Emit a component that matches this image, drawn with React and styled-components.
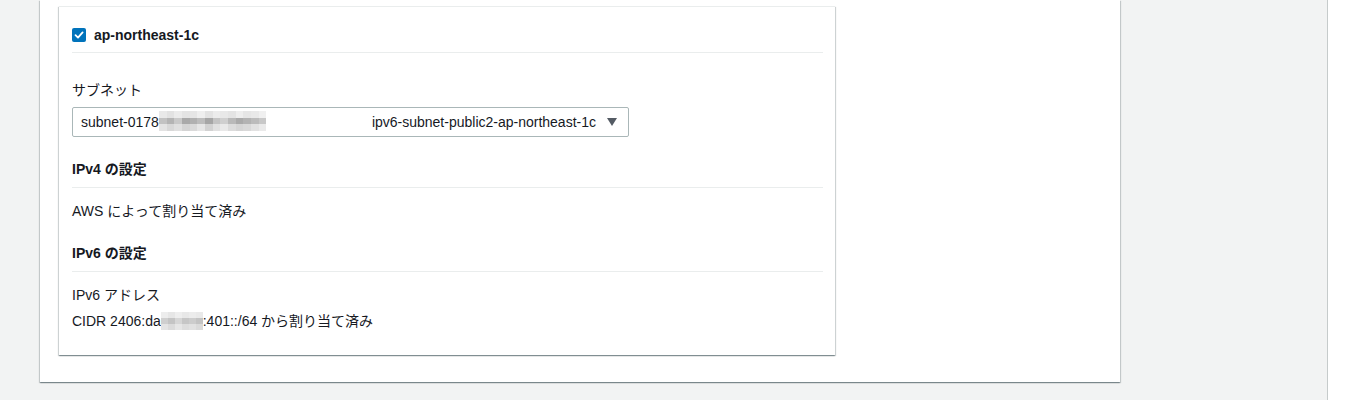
import React from 'react';
import styled, { createGlobalStyle } from 'styled-components';

const Global = createGlobalStyle`
  html, body { margin: 0; padding: 0; }
  body {
    font-family: "Liberation Sans", "Noto Sans CJK JP", sans-serif;
    font-size: 14px;
    color: #16191f;
    background: #ffffff;
  }
`;

const Page = styled.div`
  display: flex;
  width: 1368px;
  height: 400px;
  overflow: hidden;
`;

const Main = styled.main`
  flex: 0 0 1327px;
  box-sizing: border-box;
  background: #f2f3f3;
  padding-left: 40px;
`;

const SideRail = styled.aside`
  flex: 1;
  background: #ffffff;
  border-left: 1px solid #c6cbcb;
`;

const OuterCard = styled.section`
  width: 1080px;
  box-sizing: border-box;
  background: #ffffff;
  padding: 6px 19px 27px;
  box-shadow: 0 1px 1px 0 rgba(0, 28, 36, 0.3), 1px 1px 1px 0 rgba(0, 28, 36, 0.15),
    -1px 1px 1px 0 rgba(0, 28, 36, 0.15);
`;

const InnerCard = styled.div`
  width: 776px;
  box-sizing: border-box;
  background: #ffffff;
  border-top: 1px solid #eaeded;
  padding: 0 12px 24px 13px;
  box-shadow: 0 1px 1px 0 rgba(0, 28, 36, 0.3), 1px 1px 1px 0 rgba(0, 28, 36, 0.15),
    -1px 1px 1px 0 rgba(0, 28, 36, 0.15);
`;

const Header = styled.div`
  display: flex;
  align-items: center;
  gap: 8px;
  padding: 18px 0 7px;
  border-bottom: 1px solid #eaeded;
  line-height: 20px;
`;

const Check = styled.span`
  display: inline-flex;
  align-items: center;
  justify-content: center;
  width: 14px;
  height: 14px;
  border-radius: 2px;
  background: #0073bb;
  flex: 0 0 14px;
`;

const HeaderTitle = styled.span`
  font-weight: 700;
`;

const Field = styled.div`
  margin-top: 27px;
  width: 557px;
`;

const Label = styled.div`
  line-height: 20px;
  margin-bottom: 7px;
`;

const Select = styled.div`
  display: flex;
  align-items: center;
  height: 30px;
  box-sizing: border-box;
  border: 1px solid #aab7b8;
  border-radius: 2px;
  padding: 0 11px 0 8px;
  line-height: 20px;
`;

const SelectValue = styled.span`
  display: inline-flex;
  align-items: center;
`;

const SelectTag = styled.span`
  margin-left: auto;
  margin-right: 11px;
`;

const Caret = styled.span`
  width: 0;
  height: 0;
  border-left: 5px solid transparent;
  border-right: 5px solid transparent;
  border-top: 8px solid #545b64;
`;

const Mosaic = styled.span`
  display: inline-grid;
  grid-template-columns: repeat(${(p) => p.$cols}, ${(p) => p.$cell}px);
  grid-auto-rows: ${(p) => p.$rowH}px;
  vertical-align: middle;
  margin-top: -2px;
`;

const Tile = styled.span`
  background: ${(p) => p.$shade};
`;

const Section = styled.div`
  margin-top: 22px;
`;

const SectionTitle = styled.div`
  font-weight: 700;
  line-height: 20px;
  padding-bottom: 8px;
  border-bottom: 1px solid #eaeded;
`;

const SectionBody = styled.div`
  padding-top: 13px;
  display: flex;
  flex-direction: column;
  gap: 6px;
`;

const Line = styled.div`
  line-height: 20px;
`;

const subnetShades = [
  ['#e9e9e9', '#e2e2e2', '#ebebeb', '#e4e4e4', '#e6e6e6', '#efefef', '#e3e3e3', '#ececec', '#e8e8e8', '#e4e4e4', '#eeeeee', '#e6e6e6', '#e9e9e9', '#f0f0f0'],
  ['#c2c2c2', '#b4b4b4', '#c9c9c9', '#a9a9a9', '#b1b1b1', '#bdbdbd', '#a6a6a6', '#c4c4c4', '#cfcfcf', '#b9b9b9', '#aaaaaa', '#b3b3b3', '#bcbcbc', '#c8c8c8'],
  ['#e3e3e3', '#d8d8d8', '#e0e0e0', '#d4d4d4', '#dadada', '#e6e6e6', '#d2d2d2', '#e1e1e1', '#e9e9e9', '#dcdcdc', '#d5d5d5', '#d9d9d9', '#e2e2e2', '#eaeaea'],
];

const cidrShades = [
  ['#ededed', '#e6e6e6', '#eeeeee', '#e8e8e8', '#ececec', '#e9e9e9'],
  ['#cfcfcf', '#c4c4c4', '#d6d6d6', '#c6c6c6', '#cccccc', '#c3c3c3'],
  ['#e4e4e4', '#dbdbdb', '#e6e6e6', '#dddddd', '#e1e1e1', '#dadada'],
];

function Blur({ shades, cell, rowH }) {
  return (
    <Mosaic $cols={shades[0].length} $cell={cell} $rowH={rowH}>
      {shades.flatMap((row, r) => row.map((s, c) => <Tile key={`${r}-${c}`} $shade={s} />))}
    </Mosaic>
  );
}

export default function App() {
  return (
    <>
      <Global />
      <Page>
        <Main>
          <OuterCard>
            <InnerCard>
              <Header>
                <Check>
                  <svg width="10" height="10" viewBox="0 0 10 10">
                    <path d="M1.5 5.2 L4 7.6 L8.6 2.4" fill="none" stroke="#fff" strokeWidth="1.8" strokeLinecap="round" strokeLinejoin="round" />
                  </svg>
                </Check>
                <HeaderTitle>ap-northeast-1c</HeaderTitle>
              </Header>

              <Field>
                <Label>サブネット</Label>
                <Select>
                  <SelectValue>
                    subnet-0178
                    <Blur shades={subnetShades} cell={7.7} rowH={6.5} />
                  </SelectValue>
                  <SelectTag>ipv6-subnet-public2-ap-northeast-1c</SelectTag>
                  <Caret />
                </Select>
              </Field>

              <Section>
                <SectionTitle>IPv4 の設定</SectionTitle>
                <SectionBody>
                  <Line>AWS によって割り当て済み</Line>
                </SectionBody>
              </Section>

              <Section>
                <SectionTitle>IPv6 の設定</SectionTitle>
                <SectionBody>
                  <Line>IPv6 アドレス</Line>
                  <Line>
                    CIDR 2406:da
                    <Blur shades={cidrShades} cell={7} rowH={6} />
                    :401::/64 から割り当て済み
                  </Line>
                </SectionBody>
              </Section>
            </InnerCard>
          </OuterCard>
        </Main>
        <SideRail />
      </Page>
    </>
  );
}
